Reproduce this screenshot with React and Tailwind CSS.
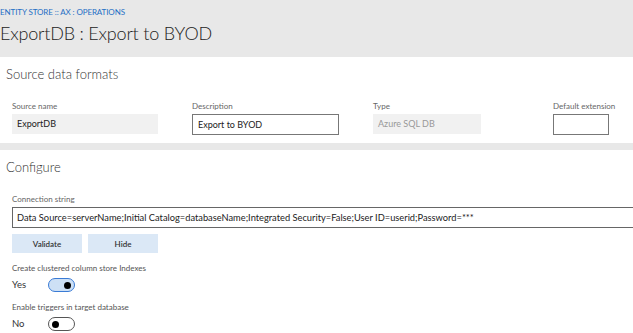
import React from 'react';

const Field = ({ label, value, variant, width }) => (
  <div className={`flex flex-col ${width}`}>
    <span className="text-[8px] leading-[10px] text-[#666] mb-[3px] whitespace-nowrap">{label}</span>
    {variant === 'filled' ? (
      <div className={`h-[20px] bg-[#f1f1f1] px-[5px] flex items-center text-[9px] ${value === 'Azure SQL DB' ? 'text-[#999]' : 'text-[#222]'}`}>{value}</div>
    ) : (
      <div className="h-[21px] border border-[#777] bg-white px-[5px] flex items-center text-[9px] text-[#222]">{value}</div>
    )}
  </div>
);

const Toggle = ({ on }) => (
  <div className={`w-[27px] h-[14px] rounded-full border flex items-center px-[3px] ${on ? 'bg-[#cde0f5] border-[#3a7bd5] justify-end' : 'bg-white border-[#555] justify-start'}`}>
    <div className="w-[7px] h-[7px] rounded-full bg-black" />
  </div>
);

export default function App() {
  return (
    <div className="w-[633px] h-[333px] overflow-hidden bg-[#e8e8e8] font-['Lato',sans-serif] text-[#222]">
      <div className="h-[57px] pt-[6px]">
        <div className="text-[8px] leading-[12px] text-[#1f6fc5] tracking-[-0.1px]">ENTITY STORE :: AX : OPERATIONS</div>
        <h1 className="text-[18px] leading-[26px] font-light mt-[2px] text-[#222] tracking-[-0.2px]">ExportDB : Export to BYOD</h1>
      </div>

      <section className="bg-white h-[86px] px-[6px] pt-[8px]">
        <h2 className="text-[13px] leading-[18px] font-light text-[#333]">Source data formats</h2>
        <div className="flex mt-[18px] pl-[6px] gap-[34px]">
          <Field label="Source name" value="ExportDB" variant="filled" width="w-[146px]" />
          <Field label="Description" value="Export to BYOD" variant="border" width="w-[147px]" />
          <Field label="Type" value="Azure SQL DB" variant="filled" width="w-[108px]" />
          <div className="ml-[38px]">
            <Field label="Default extension" value="" variant="border" width="w-[56px]" />
          </div>
        </div>
      </section>

      <section className="bg-white mt-[7px] h-[183px] px-[6px] pt-[8px]">
        <h2 className="text-[13px] leading-[18px] font-light text-[#333]">Configure</h2>
        <div className="pl-[6px] mt-[18px]">
          <div className="text-[8px] leading-[10px] text-[#666] mb-[3px]">Connection string</div>
          <div className="h-[21px] w-[640px] border border-[#666] px-[4px] flex items-center text-[9.3px] whitespace-nowrap">
            Data Source=serverName;Initial Catalog=databaseName;Integrated Security=False;User ID=userid;Password=***
          </div>
          <div className="flex gap-[6px] mt-[6px]">
            <button className="w-[70px] h-[19px] bg-[#dbe8f6] text-[8px] font-semibold text-[#333]">Validate</button>
            <button className="w-[70px] h-[19px] bg-[#dbe8f6] text-[8px] font-semibold text-[#333]">Hide</button>
          </div>
          <div className="text-[8px] leading-[10px] text-[#555] mt-[10px]">Create clustered column store Indexes</div>
          <div className="flex items-center mt-[5px]">
            <span className="w-[36px] text-[9.5px] text-[#333]">Yes</span>
            <Toggle on />
          </div>
          <div className="text-[8px] leading-[10px] text-[#555] mt-[10px]">Enable triggers in target database</div>
          <div className="flex items-center mt-[5px]">
            <span className="w-[36px] text-[9.5px] text-[#333]">No</span>
            <Toggle />
          </div>
        </div>
      </section>
    </div>
  );
}
